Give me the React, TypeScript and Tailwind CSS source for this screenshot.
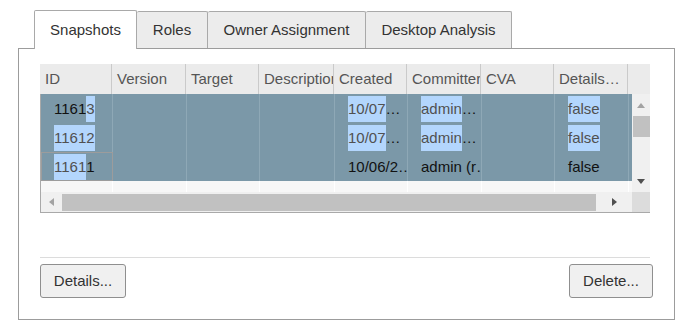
import React from "react";

type Seg = { t: string; hl?: boolean };
type Row = { id: Seg[]; created: Seg[]; committer: Seg[]; details: Seg[]; focus?: boolean };

const colW = ["w-[72px]", "w-[74px]", "w-[73px]", "w-[75px]", "w-[73px]", "w-[74px]", "w-[73px]", "w-[74px]"];
const headers = ["ID", "Version", "Target", "Description", "Created", "Committer", "CVA", "Details…"];

const rows: Row[] = [
  {
    id: [{ t: "1161" }, { t: "3", hl: true }],
    created: [{ t: "10/07", hl: true }, { t: "…" }],
    committer: [{ t: "admin", hl: true }, { t: "…" }],
    details: [{ t: "false", hl: true }],
  },
  {
    id: [{ t: "11612", hl: true }],
    created: [{ t: "10/07", hl: true }, { t: "…" }],
    committer: [{ t: "admin", hl: true }, { t: "…" }],
    details: [{ t: "false", hl: true }],
  },
  {
    id: [{ t: "1161", hl: true }, { t: "1" }],
    created: [{ t: "10/06/2…" }],
    committer: [{ t: "admin (r…" }],
    details: [{ t: "false" }],
    focus: true,
  },
];

const Segs = ({ segs }: { segs?: Seg[] }) => (
  <>
    {segs?.map((s, i) => (
      <span
        key={i}
        className={s.hl ? "inline-block h-[26px] leading-[26px] bg-[#b3d6fd] text-[#505050]" : "inline-block h-[26px] leading-[26px] text-[#111]"}
      >
        {s.t}
      </span>
    ))}
  </>
);

const tabs = [
  { label: "Snapshots", w: "w-[103px]", active: true },
  { label: "Roles", w: "w-[71px]" },
  { label: "Owner Assignment", w: "w-[158px]" },
  { label: "Desktop Analysis", w: "w-[146px]" },
];

const Tri = ({ dir, dark }: { dir: "up" | "down" | "left" | "right"; dark?: boolean }) => {
  const pts = {
    up: "0,7 8,7 4,2",
    down: "0,1 8,1 4,6",
    left: "6,0 6,8 1,4",
    right: "2,0 2,8 7,4",
  }[dir];
  return (
    <svg width="8" height="8" viewBox="0 0 8 8">
      <polygon points={pts} fill={dark ? "#505050" : "#a3a3a3"} />
    </svg>
  );
};

export default function App() {
  return (
    <div className="bg-white w-[682px] h-[323px] pt-[10px] font-['Liberation_Sans',Arial,sans-serif] text-[15px]">
      {/* tabs */}
      <div className="flex items-end pl-[34px] relative z-10">
        {tabs.map((t) => (
          <div
            key={t.label}
            className={
              t.active
                ? `${t.w} h-[39px] -mb-px flex items-center justify-center bg-white border border-b-0 border-[#a9a9a9] rounded-t-[2px] text-[#333]`
                : `${t.w} h-[37px] flex items-center justify-center bg-[#ececec] border border-b-0 border-l-0 border-[#a9a9a9] rounded-t-[2px] text-[#333]`
            }
          >
            {t.label}
          </div>
        ))}
      </div>

      {/* panel */}
      <div className="ml-[18px] w-[657px] h-[272px] border border-[#9c9c9c] pl-[21px] pt-[15px]">
        {/* table */}
        <div className="w-[610px]">
          <div className="flex h-[30px] bg-[#ebebeb] text-[#555]">
            {headers.map((h, i) => (
              <div key={h} className={`${colW[i]} h-full border-r border-[#cacaca] pl-[5px] flex items-center overflow-hidden whitespace-nowrap`}>
                {h}
              </div>
            ))}
            <div className="flex-1" />
          </div>

          <div className="flex border-l border-[#a9a9a9]">
            <div className="w-[591px] h-[98px] overflow-hidden">
              {rows.map((r, ri) => {
                const cells: (Seg[] | undefined)[] = [r.id, undefined, undefined, undefined, r.created, r.committer, undefined, r.details];
                return (
                  <div key={ri} className="flex h-[29px] bg-[#7b98a8]">
                    {cells.map((c, ci) => (
                      <div
                        key={ci}
                        className={
                          ci === 0 && r.focus
                            ? `${colW[ci]} h-full border border-[#9c9c9c] pl-[12px] flex items-center overflow-hidden whitespace-nowrap`
                            : `${colW[ci]} h-full border-r border-[#8ea8b6] pl-[13px] flex items-center overflow-hidden whitespace-nowrap`
                        }
                      >
                        <Segs segs={c} />
                      </div>
                    ))}
                    <div className="flex-1" />
                  </div>
                );
              })}
              <div className="flex h-[29px] bg-[#f7f7f7]">
                {colW.map((w, i) => (
                  <div key={i} className={`${w} h-full border-r border-[#ffffff]`} />
                ))}
              </div>
            </div>
            {/* vertical scrollbar */}
            <div className="w-[18px] h-[98px] bg-[#f0f0f0] flex flex-col items-center">
              <div className="h-[22px] flex items-center justify-center">
                <Tri dir="up" />
              </div>
              <div className="w-[17px] ml-px h-[21px] bg-[#c1c1c1]" />
              <div className="flex-1" />
              <div className="h-[20px] flex items-center justify-center">
                <Tri dir="down" dark />
              </div>
            </div>
          </div>

          {/* horizontal scrollbar */}
          <div className="flex h-[21px] border-l border-b border-[#a9a9a9]">
            <div className="w-[591px] h-[20px] bg-[#f0f0f0] flex items-center">
              <div className="w-[21px] flex justify-center">
                <Tri dir="left" />
              </div>
              <div className="w-[534px] h-[17px] bg-[#c1c1c1]" />
              <div className="flex-1 flex justify-center">
                <Tri dir="right" dark />
              </div>
            </div>
            <div className="w-[18px] h-[20px] bg-[#dcdcdc]" />
          </div>
        </div>

        {/* footer */}
        <div className="w-[610px] h-px bg-[#dcdcdc] mt-[44px]" />
        <div className="w-[613px] flex justify-between mt-[6px]">
          <button className="w-[86px] h-[34px] bg-[#f0f0f0] border border-[#8f8f8f] rounded-[3px] text-[#333] text-[15px]">
            Details...
          </button>
          <button className="w-[84px] h-[34px] bg-[#f0f0f0] border border-[#8f8f8f] rounded-[3px] text-[#333] text-[15px]">
            Delete...
          </button>
        </div>
      </div>
    </div>
  );
}
